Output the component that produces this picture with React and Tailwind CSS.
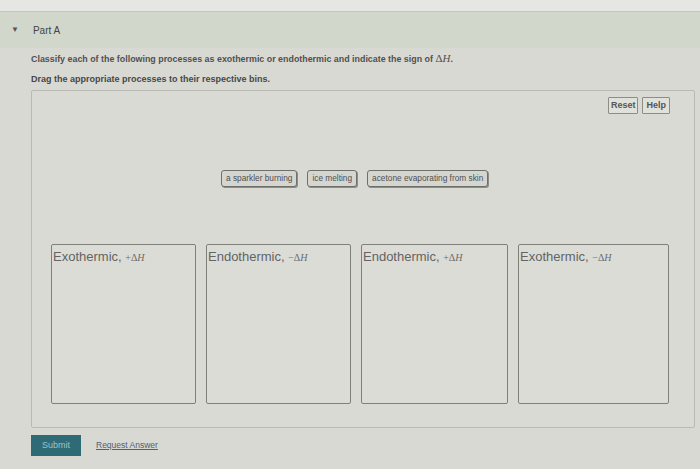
import React from "react";

const items = ["a sparkler burning", "ice melting", "acetone evaporating from skin"];

const bins = [
  { label: "Exothermic,", sign: "+" },
  { label: "Endothermic,", sign: "−" },
  { label: "Endothermic,", sign: "+" },
  { label: "Exothermic,", sign: "−" },
];

function DeltaH({ sign }) {
  return (
    <span className="text-[10px] text-[#6b6b6b]" style={{ fontFamily: '"Liberation Serif", serif' }}>
      {sign}Δ<i>H</i>
    </span>
  );
}

export default function App() {
  return (
    <div
      className="w-[700px] h-[469px] overflow-hidden bg-[#d9d9d3] text-[#4a4a4a]"
      style={{ fontFamily: '"Liberation Sans", Arial, sans-serif' }}
    >
      {/* top strip */}
      <div className="h-[12px] bg-[#e6e7e2] border-b border-[#c4c6bf]" />

      {/* Part A header */}
      <div className="h-[36px] bg-[#d2d7cc] flex items-center pl-[11px] gap-[14px]">
        <span className="text-[8px] text-[#555]">▼</span>
        <span className="text-[10px] text-[#444]">Part A</span>
      </div>

      <div className="pl-[31px] pr-[5px]">
        <p className="mt-[4px] text-[8.9px] font-bold text-[#505050] leading-[12px]">
          Classify each of the following processes as exothermic or endothermic and indicate the sign of{" "}
          <span className="text-[11px] font-normal" style={{ fontFamily: '"Liberation Serif", serif' }}>
            Δ<i>H</i>
          </span>
          .
        </p>
        <p className="mt-[8px] text-[9px] font-bold text-[#474747] leading-[12px]">
          Drag the appropriate processes to their respective bins.
        </p>

        {/* work area */}
        <div className="mt-[5px] h-[338px] border border-[#b9bab4] rounded-[2px] bg-[#dadad4] flex flex-col">
          <div className="flex justify-end gap-[4px] pt-[6px] pr-[24px]">
            <button className="h-[17px] px-[2px] border border-[#8d8d88] bg-[#e1e1dc] text-[9px] font-bold text-[#555] rounded-[1px]">
              Reset
            </button>
            <button className="h-[17px] px-[3px] border border-[#8d8d88] bg-[#e1e1dc] text-[9px] font-bold text-[#555] rounded-[1px]">
              Help
            </button>
          </div>

          <div className="mt-[56px] flex gap-[10px] pl-[189px]">
            {items.map((t) => (
              <div
                key={t}
                className="h-[17px] px-[4px] flex items-center border border-[#6f6f6c] rounded-[3px] bg-[#d6d6d1] text-[8.3px] text-[#4f4f4f] shadow-[1px_1px_0_#8c8c88]"
              >
                {t}
              </div>
            ))}
          </div>

          <div className="mt-[57px] flex gap-[10px] pl-[19px]">
            {bins.map((b, i) => (
              <div
                key={i}
                className={`h-[160px] border border-[#7f7f7c] rounded-[2px] bg-[#dcdcd7] ${
                  i === 3 ? "w-[151px]" : i === 2 ? "w-[147px]" : "w-[145px]"
                }`}
              >
                <div className="pl-[1px] pt-[4px] text-[13px] leading-[16px] text-[#636363]">
                  {b.label} <DeltaH sign={b.sign} />
                </div>
              </div>
            ))}
          </div>
        </div>

        {/* footer */}
        <div className="mt-[7px] flex items-center gap-[15px]">
          <button className="w-[50px] h-[21px] bg-[#2e6b77] text-[#9fc0c6] text-[9px]">Submit</button>
          <a className="text-[8.5px] text-[#4d6273] underline">Request Answer</a>
        </div>
      </div>
    </div>
  );
}
